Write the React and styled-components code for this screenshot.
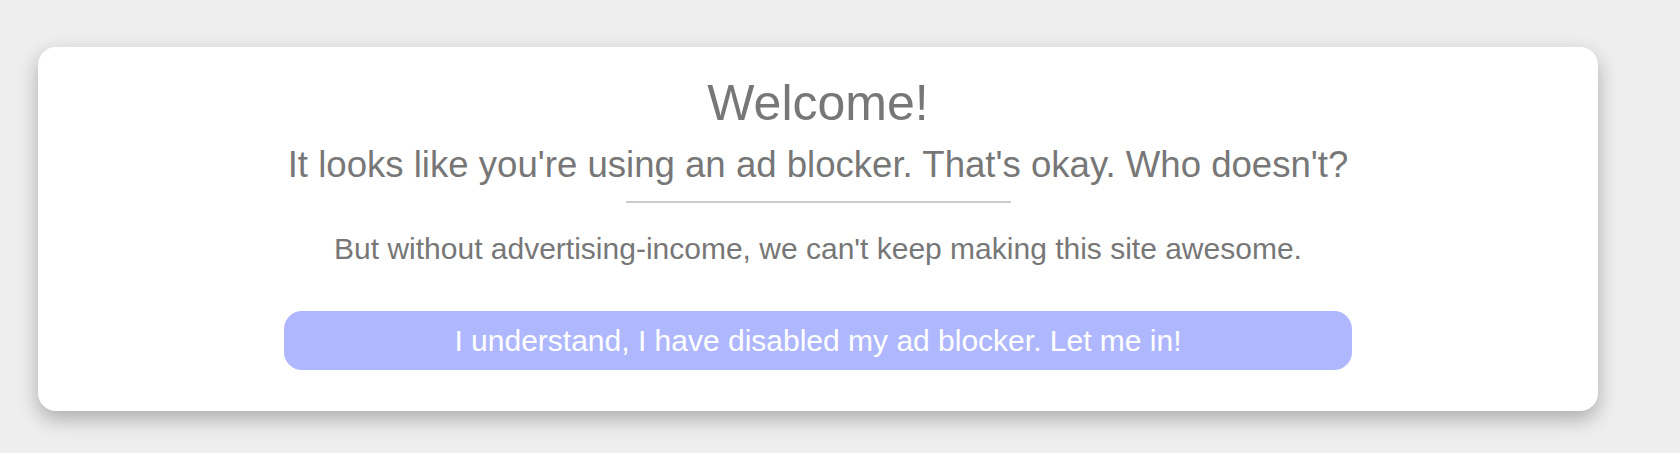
import React from "react";
import styled, { createGlobalStyle } from "styled-components";

const GlobalStyle = createGlobalStyle`
  html, body {
    margin: 0;
    padding: 0;
    background-color: #eeeeee;
    font-family: "Liberation Sans", Arial, sans-serif;
  }
`;

const Page = styled.div`
  min-height: 453px;
  padding: 47px 82px 0 38px;
  box-sizing: border-box;
`;

const Card = styled.div`
  width: 1560px;
  box-sizing: border-box;
  padding: 28px 20px 41px;
  background-color: #fff;
  border-radius: 18px;
  box-shadow: 0 8px 20px rgba(0, 0, 0, 0.28);
  display: flex;
  flex-direction: column;
  align-items: center;
  text-align: center;
  color: #777777;
`;

const Title = styled.h1`
  margin: 0;
  font-size: 50px;
  line-height: 56px;
  font-weight: normal;
`;

const Subtitle = styled.h2`
  margin: 13px 0 0;
  font-size: 36.6px;
  line-height: 42px;
  font-weight: normal;
`;

const Divider = styled.hr`
  width: 385px;
  height: 2px;
  margin: 15px 0 0;
  border: none;
  background-color: #cccccc;
`;

const Message = styled.p`
  margin: 28px 0 0;
  font-size: 30px;
  line-height: 36px;
`;

const Button = styled.button`
  margin-top: 44px;
  width: 1068px;
  padding: 12px 0 11px;
  border: none;
  border-radius: 18px;
  background-color: #afb8fe;
  color: #fff;
  font-family: inherit;
  font-size: 30px;
  line-height: 36px;
  cursor: pointer;

  &:hover {
    background-color: #a2acfc;
  }
`;

const App = () => {
  return (
    <>
      <GlobalStyle />
      <Page>
        <Card>
          <Title>Welcome!</Title>
          <Subtitle>
            It looks like you're using an ad blocker. That's okay. Who doesn't?
          </Subtitle>
          <Divider />
          <Message>
            But without advertising-income, we can't keep making this site
            awesome.
          </Message>
          <Button type="button">
            I understand, I have disabled my ad blocker. Let me in!
          </Button>
        </Card>
      </Page>
    </>
  );
};

export default App;
